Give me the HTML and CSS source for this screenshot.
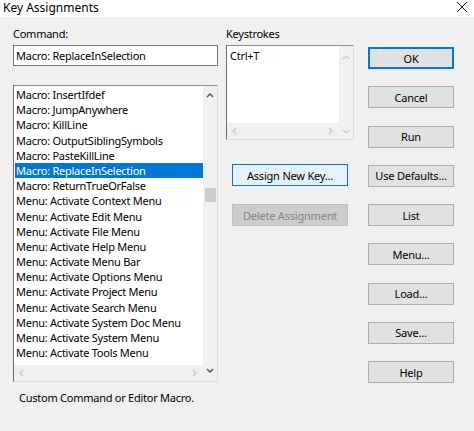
FILE: index.html
```html
<!DOCTYPE html>
<html>
  <head>
    <title>Key Assignments</title>
    <link rel="stylesheet" href="styles.css">
  </head>
  <body>
    <div class="titlebar">
      <span class="title">Key Assignments</span>
      <svg class="close" width="12" height="12" viewBox="0 0 12 12">
        <path d="M1 1 L11 11 M11 1 L1 11" stroke="#1a1a1a" stroke-width="1" fill="none" />
      </svg>
    </div>

    <div class="dialog">
      <div class="col-left">
        <div class="label">Command:</div>
        <div class="edit">Macro: ReplaceInSelection</div>

        <div class="listbox">
          <ul class="items">
            <li>Macro: InsertIfdef</li>
            <li>Macro: JumpAnywhere</li>
            <li>Macro: KillLine</li>
            <li>Macro: OutputSiblingSymbols</li>
            <li>Macro: PasteKillLine</li>
            <li class="selected">Macro: ReplaceInSelection</li>
            <li>Macro: ReturnTrueOrFalse</li>
            <li>Menu: Activate Context Menu</li>
            <li>Menu: Activate Edit Menu</li>
            <li>Menu: Activate File Menu</li>
            <li>Menu: Activate Help Menu</li>
            <li>Menu: Activate Menu Bar</li>
            <li>Menu: Activate Options Menu</li>
            <li>Menu: Activate Project Menu</li>
            <li>Menu: Activate Search Menu</li>
            <li>Menu: Activate System Doc Menu</li>
            <li>Menu: Activate System Menu</li>
            <li>Menu: Activate Tools Menu</li>
          </ul>
          <div class="vscroll">
            <svg class="arrow" width="8" height="6" viewBox="0 0 8 6"><path d="M1 5 L4 2 L7 5" stroke="#505050" stroke-width="1.4" fill="none" /></svg>
            <div class="thumb"></div>
            <svg class="arrow" width="8" height="6" viewBox="0 0 8 6"><path d="M1 1 L4 4 L7 1" stroke="#505050" stroke-width="1.4" fill="none" /></svg>
          </div>
          <div class="hscroll">
            <svg width="6" height="8" viewBox="0 0 6 8"><path d="M5 1 L2 4 L5 7" stroke="#c8c8c8" stroke-width="1.2" fill="none" /></svg>
            <svg width="6" height="8" viewBox="0 0 6 8"><path d="M1 1 L4 4 L1 7" stroke="#c8c8c8" stroke-width="1.2" fill="none" /></svg>
          </div>
        </div>

        <p class="desc">Custom Command or Editor Macro.</p>
      </div>

      <div class="col-mid">
        <div class="label">Keystrokes</div>
        <div class="listbox keys">
          <ul class="items">
            <li>Ctrl+T</li>
          </ul>
          <div class="vscroll">
            <svg class="arrow" width="8" height="6" viewBox="0 0 8 6"><path d="M1 5 L4 2 L7 5" stroke="#c8c8c8" stroke-width="1.2" fill="none" /></svg>
            <svg class="arrow" width="8" height="6" viewBox="0 0 8 6"><path d="M1 1 L4 4 L7 1" stroke="#c8c8c8" stroke-width="1.2" fill="none" /></svg>
          </div>
          <div class="hscroll">
            <svg width="6" height="8" viewBox="0 0 6 8"><path d="M5 1 L2 4 L5 7" stroke="#c8c8c8" stroke-width="1.2" fill="none" /></svg>
            <svg width="6" height="8" viewBox="0 0 6 8"><path d="M1 1 L4 4 L1 7" stroke="#c8c8c8" stroke-width="1.2" fill="none" /></svg>
          </div>
        </div>
        <button class="btn wide hot">Assign New Key...</button>
        <button class="btn wide" disabled>Delete Assignment</button>
      </div>

      <div class="col-right">
        <button class="btn default">OK</button>
        <button class="btn">Cancel</button>
        <button class="btn">Run</button>
        <button class="btn">Use Defaults...</button>
        <button class="btn">List</button>
        <button class="btn">Menu...</button>
        <button class="btn">Load...</button>
        <button class="btn">Save...</button>
        <button class="btn">Help</button>
      </div>
    </div>
  </body>
</html>
```

FILE: styles.css
```css
html, body {
  margin: 0;
  height: 100%;
}

body {
  font-family: "Noto Sans", "Open Sans", sans-serif;
  font-size: 11px;
  letter-spacing: -0.25px;
  color: #000;
  background: #f0f0f0;
  overflow: hidden;
}

.titlebar {
  height: 17px;
  box-sizing: border-box;
  background: #fff;
  display: flex;
  justify-content: space-between;
  align-items: flex-start;
  padding: 1px 6px 0 3px;
}

.title {
  font-size: 12px;
  line-height: 13px;
  letter-spacing: 0;
}

.dialog {
  display: flex;
  padding-left: 13px;
}

.col-left {
  width: 205px;
  display: flex;
  flex-direction: column;
}

.col-mid {
  width: 128px;
  margin-left: 8px;
  display: flex;
  flex-direction: column;
  align-items: center;
}

.col-right {
  width: 86px;
  margin-left: 14px;
  padding-top: 30px;
  display: flex;
  flex-direction: column;
  gap: 17.25px;
}

.label {
  margin-top: 9px;
  line-height: 15px;
  height: 15px;
  align-self: flex-start;
}

.edit {
  margin-top: 4px;
  height: 21px;
  box-sizing: border-box;
  border: 1px solid #7a7a7a;
  background: #fff;
  padding: 0 2px;
  line-height: 19px;
}

.listbox {
  margin-top: 19px;
  height: 297px;
  box-sizing: border-box;
  border-top: 1px solid #8c8c8c;
  border-left: 1px solid #6e6e6e;
  border-right: 1px solid #dcdcdc;
  border-bottom: 1px solid #dcdcdc;
  background: #fff;
  display: grid;
  grid-template-columns: 1fr 14px;
  grid-template-rows: 1fr 16px;
}

.items {
  list-style: none;
  margin: 0;
  padding: 1px 0 0 1px;
  overflow: hidden;
  min-height: 0;
}

.items li {
  line-height: 15.2px;
  height: 15.2px;
  padding-left: 1px;
  white-space: nowrap;
}

.items li.selected {
  background: #0078d7;
  color: #fff;
}

.vscroll {
  grid-row: 1 / 3;
  grid-column: 2;
  background: #f0f0f0;
  display: flex;
  flex-direction: column;
  align-items: center;
  justify-content: space-between;
  padding: 6px 0 7px;
  position: relative;
}

.thumb {
  position: absolute;
  left: 2px;
  right: 1px;
  top: 102px;
  height: 14px;
  background: #cdcdcd;
}

.hscroll {
  grid-row: 2;
  grid-column: 1;
  background: #f0f0f0;
  display: flex;
  justify-content: space-between;
  align-items: center;
  padding: 0 5px 0 4px;
}

.keys {
  margin-top: 4px;
  width: 128px;
  height: 95px;
}

.keys .items li {
  padding-left: 2px;
  line-height: 17px;
  height: 17px;
}

.keys .vscroll {
  padding: 8px 0 4px;
}

.desc {
  margin: 8px 0 0 6px;
  line-height: 15px;
}

.btn {
  font-family: inherit;
  font-size: 11px;
  letter-spacing: -0.2px;
  color: #000;
  height: 22px;
  box-sizing: border-box;
  border: 1px solid #adadad;
  background: #e1e1e1;
  padding: 0;
  width: 86px;
}

.btn.default {
  border: 2px solid #0078d7;
}

.btn.wide {
  width: 116px;
  margin-top: 18px;
}

.btn.hot {
  margin-top: 24px;
  background: #e5f1fb;
  border-color: #0078d7;
}

.btn:disabled {
  background: #cccccc;
  border-color: #bfbfbf;
  color: #838383;
}
```
